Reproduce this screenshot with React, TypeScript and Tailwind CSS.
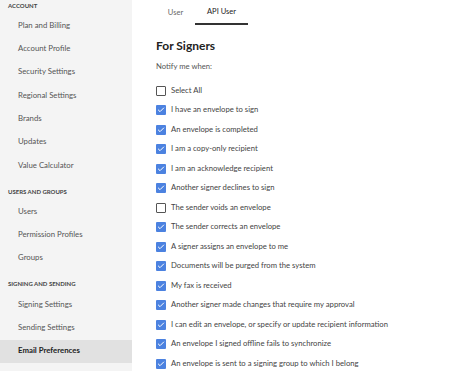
import { Check } from "lucide-react";

const sections = [
  {
    title: "ACCOUNT",
    items: ["Plan and Billing", "Account Profile", "Security Settings", "Regional Settings", "Brands", "Updates", "Value Calculator"],
  },
  {
    title: "USERS AND GROUPS",
    items: ["Users", "Permission Profiles", "Groups"],
  },
  {
    title: "SIGNING AND SENDING",
    items: ["Signing Settings", "Sending Settings", "Email Preferences"],
  },
];

const options: [string, boolean][] = [
  ["Select All", false],
  ["I have an envelope to sign", true],
  ["An envelope is completed", true],
  ["I am a copy-only recipient", true],
  ["I am an acknowledge recipient", true],
  ["Another signer declines to sign", true],
  ["The sender voids an envelope", false],
  ["The sender corrects an envelope", true],
  ["A signer assigns an envelope to me", true],
  ["Documents will be purged from the system", true],
  ["My fax is received", true],
  ["Another signer made changes that require my approval", true],
  ["I can edit an envelope, or specify or update recipient information", true],
  ["An envelope I signed offline fails to synchronize", true],
  ["An envelope is sent to a signing group to which I belong", true],
];

export default function App() {
  return (
    <div className="flex h-[371px] w-[474px] overflow-hidden bg-white font-['Lato',sans-serif] text-[#333]">
      <aside className="w-[132px] shrink-0 bg-[#f4f4f4]">
        {sections.map((s, i) => (
          <div key={s.title} className={i > 0 ? "mt-[9px]" : ""}>
            <div className="flex h-[10px] items-center pl-[8px] text-[6px] font-bold text-[#444]">
              {s.title}
            </div>
            <div className="mt-[4px]">
              {s.items.map((it) => {
                const active = it === "Email Preferences";
                return (
                  <div
                    key={it}
                    className={`flex h-[23.3px] items-center pl-[18px] text-[7.8px] ${
                      active ? "bg-[#e1e1e1] font-bold text-[#222]" : "text-[#555]"
                    }`}
                  >
                    {it}
                  </div>
                );
              })}
            </div>
          </div>
        ))}
      </aside>
      <main className="flex-1 pl-[24px]">
        <div className="flex h-[25px] text-[7.5px]">
          <div className="flex w-[39px] items-center justify-center text-[#666]">User</div>
          <div className="flex w-[53px] items-center justify-center border-b-2 border-[#333] text-[#222]">
            API User
          </div>
        </div>
        <h1 className="mt-[13px] text-[12px] font-bold leading-[16px] text-[#222]">For Signers</h1>
        <p className="mt-[6px] text-[7.7px] leading-[12px] text-[#555]">Notify me when:</p>
        <div className="mt-[9px] flex flex-col">
          {options.map(([label, checked]) => (
            <div key={label} className="flex h-[19.5px] items-center gap-[5px]">
              {checked ? (
                <span className="flex h-[10px] w-[10px] items-center justify-center rounded-[1px] bg-[#4c82e0]">
                  <Check className="h-[8px] w-[8px] text-white" strokeWidth={3} />
                </span>
              ) : (
                <span className="h-[10px] w-[10px] rounded-[1px] border border-[#555] bg-white" />
              )}
              <span className="text-[7.7px] text-[#444]">{label}</span>
            </div>
          ))}
        </div>
      </main>
    </div>
  );
}
